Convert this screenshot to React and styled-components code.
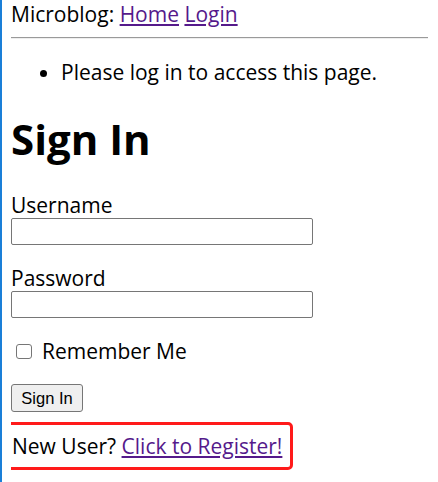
import React from "react";
import styled, { createGlobalStyle } from "styled-components";

const GlobalStyle = createGlobalStyle`
  html {
    box-shadow: inset 2px 0 0 #1a7fd8;
    min-height: 100%;
    background: #fff;
  }
  body {
    margin: 1px 10px 10px 11px;
    font-family: "Open Sans", "Noto Sans", sans-serif;
    font-size: 21px;
    line-height: 26px;
    color: #000;
  }
`;

const Nav = styled.div`
  line-height: 26px;
`;

const NavLink = styled.a`
  color: #551a8b;
  text-decoration: underline;
  cursor: pointer;
`;

const Rule = styled.hr`
  margin: 10px 0;
  border: none;
  border-top: 1px solid #9a9a9a;
  border-bottom: 1px solid #eeeeee;
`;

const Flashes = styled.ul`
  margin: 20px 0;
  padding-left: 50px;
`;

const Title = styled.h1`
  font-size: 42px;
  line-height: 53px;
  font-weight: bold;
  margin: 27px 0;
`;

const Field = styled.p`
  margin: 0 0 20px;
`;

const TextInput = styled.input`
  display: block;
  box-sizing: border-box;
  width: 302px;
  height: 27px;
  margin: 0;
  border: 1px solid #767676;
  border-radius: 2px;
  font-size: 16px;
  padding: 1px 3px;
`;

const CheckRow = styled.p`
  display: flex;
  align-items: center;
  height: 26px;
  margin: 0 0 20px;
`;

const Check = styled.input`
  appearance: none;
  box-sizing: border-box;
  width: 16px;
  height: 15px;
  margin: 0 10px 0 5px;
  border: 1px solid #767676;
  border-radius: 3px;
  background: #fff;
`;

const ButtonRow = styled.div`
  margin: 0;
`;

const Button = styled.button`
  display: block;
  box-sizing: border-box;
  width: 72px;
  height: 28px;
  font-family: "Liberation Sans", Arial, sans-serif;
  font-size: 16.5px;
  background: #efefef;
  border: 1px solid #767676;
  border-radius: 3px;
  color: #000;
  padding: 0;
`;

const Highlight = styled.p`
  box-sizing: border-box;
  width: 291px;
  height: 48px;
  margin: 10px 0 0 -9px;
  padding: 8px 0 0 7px;
  border: 3px solid #ff1a1a;
  border-radius: 5px;
`;

export default function App() {
  return (
    <>
      <GlobalStyle />
      <Nav>
        Microblog: <NavLink>Home</NavLink> <NavLink>Login</NavLink>
      </Nav>
      <Rule />
      <Flashes>
        <li>Please log in to access this page.</li>
      </Flashes>
      <Title>Sign In</Title>
      <form onSubmit={(e) => e.preventDefault()}>
        <Field>
          Username
          <TextInput type="text" />
        </Field>
        <Field>
          Password
          <TextInput type="password" />
        </Field>
        <CheckRow>
          <Check type="checkbox" />
          Remember Me
        </CheckRow>
        <ButtonRow>
          <Button type="submit">Sign In</Button>
        </ButtonRow>
      </form>
      <Highlight>
        New User? <NavLink>Click to Register!</NavLink>
      </Highlight>
    </>
  );
}
